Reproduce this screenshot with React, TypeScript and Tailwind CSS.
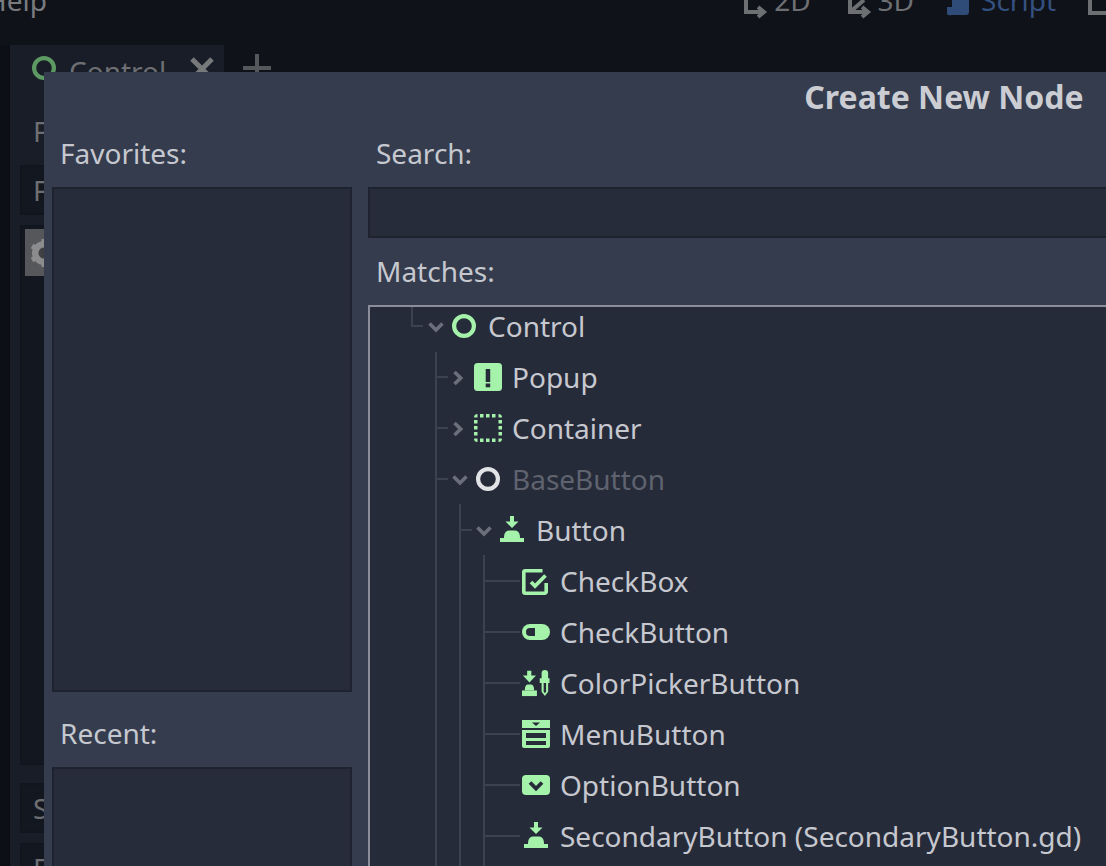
// App.tsx
import React from 'react';

const GREEN = '#a5f2ab';
const DARK = '#262b39';

const Ring = ({ color }: { color: string }) => (
    <svg width="28" height="28" viewBox="0 0 28 28">
        <circle cx="14" cy="14" r="9.9" fill="none" stroke={color} strokeWidth="4.2" />
    </svg>
);

const PopupIcon = () => (
    <svg width="28" height="28" viewBox="0 0 28 28">
        <rect width="28" height="28" rx="3.5" fill={GREEN} />
        <rect x="11.7" y="6" width="4.5" height="13" fill={DARK} />
        <rect x="11.7" y="20.5" width="4.5" height="3.8" fill={DARK} />
    </svg>
);

const ContainerIcon = () => (
    <svg width="28" height="28" viewBox="0 0 28 28" fill={GREEN}>
        <path d="M0 3.5A3.5 3.5 0 0 1 3.5 0V3.5H0Z" />
        <path d="M24.5 0A3.5 3.5 0 0 1 28 3.5H24.5V0Z" />
        <path d="M0 24.5H3.5V28A3.5 3.5 0 0 1 0 24.5Z" />
        <path d="M24.5 24.5H28A3.5 3.5 0 0 1 24.5 28V24.5Z" />
        <rect x="6" y="0" width="3.5" height="3.5" />
        <rect x="12" y="0" width="3.5" height="3.5" />
        <rect x="18" y="0" width="3.5" height="3.5" />
        <rect x="6" y="24.5" width="3.5" height="3.5" />
        <rect x="12" y="24.5" width="3.5" height="3.5" />
        <rect x="18" y="24.5" width="3.5" height="3.5" />
        <rect x="0" y="6" width="3.5" height="3.5" />
        <rect x="0" y="12" width="3.5" height="3.5" />
        <rect x="0" y="18" width="3.5" height="3.5" />
        <rect x="24.5" y="6" width="3.5" height="3.5" />
        <rect x="24.5" y="12" width="3.5" height="3.5" />
        <rect x="24.5" y="18" width="3.5" height="3.5" />
    </svg>
);

const ButtonIcon = () => (
    <svg width="28" height="28" viewBox="0 0 28 28" fill={GREEN}>
        <path d="M12 0H16V5.5H20.5L14 12L7.5 5.5H12Z" />
        <path d="M6 22C6 18 7 15 11 14.5H17C21 15 22 18 22 22Z" />
        <rect x="2" y="22" width="24" height="4" />
    </svg>
);

const CheckBoxIcon = () => (
    <svg width="28" height="28" viewBox="0 0 28 28">
        <path d="M20.5 3.8H3.3A1.5 1.5 0 0 0 1.8 5.3V24.7A1.5 1.5 0 0 0 3.3 26.2H22.7A1.5 1.5 0 0 0 24.2 24.7V16" fill="none" stroke={GREEN} strokeWidth="3.6" />
        <path d="M9 15L13 19L23.5 8.5" fill="none" stroke={GREEN} strokeWidth="3.8" />
    </svg>
);

const CheckButtonIcon = () => (
    <svg width="28" height="28" viewBox="0 0 28 28">
        <rect x="0" y="6" width="28" height="16" rx="8" fill={GREEN} />
        <path d="M13 10H8A4 4 0 0 0 8 18H13Z" fill={DARK} />
    </svg>
);

const ColorPickerIcon = () => (
    <svg width="30" height="28" viewBox="0 0 30 28" fill={GREEN}>
        <path d="M5.5 1H10V6H15L8 13.5L1 6H5.5Z" />
        <path d="M3 22C3 18 4 16 6 15.5H10C12 16 13 18 13 22Z" />
        <rect x="0" y="22" width="16" height="6" />
        <path d="M21 9V3.5A3.5 3.5 0 0 1 28 3.5V9H29.5V14H28V23.5L24.5 28L21 23.5V14H19V9Z" />
        <path d="M23.2 14H25.8V23L24.5 25L23.2 23Z" fill={DARK} />
    </svg>
);

const MenuButtonIcon = () => (
    <svg width="28" height="28" viewBox="0 0 28 28">
        <rect x="0" y="0" width="28" height="8" fill={GREEN} />
        <path d="M10 2.5H18L14 6Z" fill={DARK} />
        <path d="M0 10H28V26A2 2 0 0 1 26 28H2A2 2 0 0 1 0 26Z" fill={GREEN} />
        <rect x="4" y="13" width="20" height="5" fill={DARK} />
        <rect x="4" y="21" width="20" height="4" fill={DARK} />
    </svg>
);

const OptionButtonIcon = () => (
    <svg width="28" height="28" viewBox="0 0 28 28">
        <rect x="0" y="4" width="28" height="20" rx="4" fill={GREEN} />
        <path d="M8 11.5L14 17.5L20 11.5" fill="none" stroke={DARK} strokeWidth="3.8" />
    </svg>
);

const GearIcon = () => (
    <svg width="28" height="28" viewBox="0 0 28 28">
        <circle cx="14" cy="14" r="9" fill="none" stroke="#8c8c8e" strokeWidth="6" />
        <path d="M14 14V0M14 14L2 7M14 14L2 21M14 14V28" stroke="#8c8c8e" strokeWidth="5" />
        <circle cx="14" cy="14" r="5.5" fill="#3f4044" />
    </svg>
);

const Chevron = ({ open }: { open: boolean }) => (
    <svg width="16" height="16" viewBox="0 0 16 16">
        <path d={open ? 'M1.5 4.5L8 11L14.5 4.5' : 'M2.5 2L8.7 8L2.5 14'} fill="none" stroke="#6b6f7b" strokeWidth="3.6" />
    </svg>
);

type Row = {
    name: string;
    pad: string;
    stub: string;
    icon: React.ReactNode;
    chevron?: 'open' | 'closed';
    dim?: boolean;
};

const rows: Row[] = [
    { name: 'Control', pad: 'pl-[80px]', stub: 'left-[41px] w-[12px]', icon: <Ring color={GREEN} />, chevron: 'open' },
    { name: 'Popup', pad: 'pl-[104px]', stub: 'left-[65px] w-[13px]', icon: <PopupIcon />, chevron: 'closed' },
    { name: 'Container', pad: 'pl-[104px]', stub: 'left-[65px] w-[13px]', icon: <ContainerIcon />, chevron: 'closed' },
    { name: 'BaseButton', pad: 'pl-[104px]', stub: 'left-[65px] w-[13px]', icon: <Ring color="#e2e3e6" />, chevron: 'open', dim: true },
    { name: 'Button', pad: 'pl-[128px]', stub: 'left-[89px] w-[13px]', icon: <ButtonIcon />, chevron: 'open' },
    { name: 'CheckBox', pad: 'pl-[152px]', stub: 'left-[113px] w-[37px]', icon: <CheckBoxIcon /> },
    { name: 'CheckButton', pad: 'pl-[152px]', stub: 'left-[113px] w-[37px]', icon: <CheckButtonIcon /> },
    { name: 'ColorPickerButton', pad: 'pl-[152px]', stub: 'left-[113px] w-[37px]', icon: <ColorPickerIcon /> },
    { name: 'MenuButton', pad: 'pl-[152px]', stub: 'left-[113px] w-[37px]', icon: <MenuButtonIcon /> },
    { name: 'OptionButton', pad: 'pl-[152px]', stub: 'left-[113px] w-[37px]', icon: <OptionButtonIcon /> },
    { name: 'SecondaryButton (SecondaryButton.gd)', pad: 'pl-[152px]', stub: 'left-[113px] w-[37px]', icon: <ButtonIcon /> },
];

const TreeRow = ({ row }: { row: Row }) => (
    <div className={`relative flex h-[51px] shrink-0 items-start ${row.pad}`}>
        <span className={`absolute top-[24px] h-[2px] bg-[#3d4250] ${row.stub}`} />
        {row.chevron && (
            <span className="absolute -ml-[22px] mt-[18px] flex w-[16px]">
                <Chevron open={row.chevron === 'open'} />
            </span>
        )}
        <span className="mt-[11px] flex h-[28px] w-[28px] shrink-0">{row.icon}</span>
        <span className={`ml-[10px] mt-[6px] whitespace-nowrap ${row.dim ? 'text-[#5f636f]' : 'text-[#c6c8cf]'}`}>{row.name}</span>
    </div>
);

const App: React.FC = () => {
    return (
        <div className="relative h-[866px] w-[1106px] overflow-hidden bg-[#0f1219] font-['Noto_Sans',sans-serif] text-[28px] leading-[38px]">
            {/* editor behind the dialog */}
            <div className="flex h-[45px] items-start justify-between text-[#6d6f73]">
                <span className="-ml-[14px] -mt-[19px] text-[#797b7f]">Help</span>
                <div className="-mt-[19px] flex items-center">
                    <svg width="24" height="38" viewBox="0 0 24 38" className="mr-[6px]">
                        <path d="M2 10V31H18M14 26L20 31L14 36" fill="none" stroke="#6d6f73" strokeWidth="4" />
                    </svg>
                    <span className="mr-[37px]">2D</span>
                    <svg width="24" height="38" viewBox="0 0 24 38" className="mr-[6px]">
                        <path d="M2 16V31H18M2 31L16 19M14 26L20 31L14 36" fill="none" stroke="#6d6f73" strokeWidth="4" />
                    </svg>
                    <span className="mr-[33px]">3D</span>
                    <svg width="22" height="38" viewBox="0 0 22 38" className="mr-[12px]">
                        <path d="M5 10H22V31A3 3 0 0 1 19 34H4A3 3 0 0 1 0 30V26H5Z" fill="#2f4b78" />
                    </svg>
                    <span className="mr-[32px] text-[#34507f]">Script</span>
                    <svg width="18" height="38" viewBox="0 0 18 38">
                        <path d="M2 18V32H18" fill="none" stroke="#6d6f73" strokeWidth="4" />
                    </svg>
                </div>
            </div>
            <div className="flex h-[821px]">
                <div className="w-[10px] shrink-0 border-r border-[#090b10] bg-[#0c0f15]" />
                <div className="flex w-[214px] flex-col bg-[#181d27] text-[#6d6f73]">
                    <div className="flex h-[46px] shrink-0 items-center pl-[20px]">
                        <Ring color="#5d9a63" />
                    </div>
                    <div className="h-[74px] shrink-0 pl-[23px] pt-[26px] leading-[28px]">F</div>
                    <div className="mx-[10px] flex h-[50px] shrink-0 items-center border-2 border-[#11151d] bg-[#13171f] pl-[11px]">F</div>
                    <div className="mx-[10px] mt-[10px] flex h-[540px] shrink-0 border-2 border-[#11151d] bg-[#13171f] pl-[3px] pt-[2px]">
                        <div className="flex h-[47px] w-[40px] items-center bg-[#55575a] pl-[5px]">
                            <GearIcon />
                        </div>
                    </div>
                    <div className="mx-[10px] mt-[18px] flex h-[50px] shrink-0 items-center border-2 border-[#11151d] bg-[#13171f] pl-[11px]">S</div>
                    <div className="mx-[10px] mt-[10px] flex h-[50px] shrink-0 items-center border-2 border-[#11151d] bg-[#13171f] pl-[11px]">F</div>
                </div>
            </div>
            {/* tab close and add buttons peeking out above the dialog */}
            <span className="absolute left-[69px] top-[52px] text-[#6d6f73]">Control</span>
            <svg width="26" height="26" viewBox="0 0 26 26" className="absolute left-[189px] top-[56px]">
                <path d="M3 3L23 23M23 3L3 23" stroke="#77797a" strokeWidth="5" />
            </svg>
            <svg width="28" height="28" viewBox="0 0 28 28" className="absolute left-[243px] top-[54px]">
                <path d="M14 0V28M0 14H28" stroke="#55575a" strokeWidth="4" />
            </svg>

            {/* Create New Node dialog */}
            <div className="absolute left-[44px] top-[72px] flex h-[1000px] w-[1800px] flex-col bg-[#343c4e] text-[#c6c8cf]">
                <div className="h-[51px] shrink-0 pt-[5px] text-center text-[32px] font-bold leading-[40px] text-[#cbcdd3]">Create New Node</div>
                <div className="flex flex-1">
                    <div className="w-[324px] shrink-0 pl-[8px]">
                        <div className="h-[64px] pl-[8px] pt-[11px]">Favorites:</div>
                        <div className="h-[505px] w-[300px] border-2 border-[#1f2330] bg-[#272c3a]" />
                        <div className="h-[75px] pl-[8px] pt-[22px]">Recent:</div>
                        <div className="h-[300px] w-[300px] border-2 border-[#1f2330] bg-[#272c3a]" />
                    </div>
                    <div className="flex flex-1 flex-col">
                        <div className="h-[64px] pl-[8px] pt-[11px]">Search:</div>
                        <div className="h-[51px] border-2 border-[#1f2330] bg-[#272c3a]" />
                        <div className="h-[67px] pl-[8px] pt-[14px]">Matches:</div>
                        <div className="relative flex flex-1 flex-col overflow-hidden border-2 border-[#8b8e98] bg-[#262b39]">
                            {/* tree guide lines */}
                            <span className="absolute left-[41px] top-0 h-[20px] w-[2px] bg-[#3d4250]" />
                            <span className="absolute left-[65px] top-[45px] h-[800px] w-[2px] bg-[#3d4250]" />
                            <span className="absolute left-[89px] top-[197px] h-[600px] w-[2px] bg-[#3d4250]" />
                            <span className="absolute left-[113px] top-[248px] h-[600px] w-[2px] bg-[#3d4250]" />
                            <div className="-mt-[6px] flex flex-col">
                                {rows.map((row, index) => (
                                    <TreeRow key={index} row={row} />
                                ))}
                            </div>
                        </div>
                    </div>
                </div>
            </div>
        </div>
    );
};

export default App;
